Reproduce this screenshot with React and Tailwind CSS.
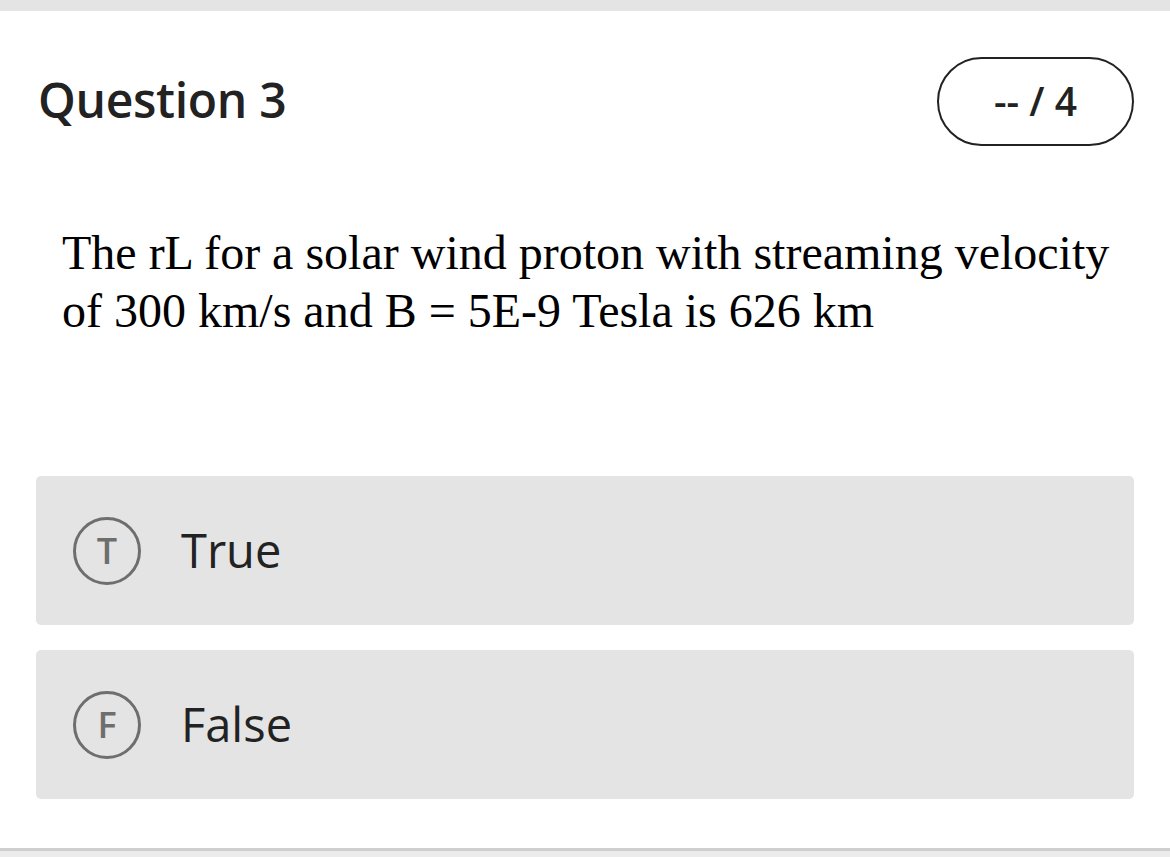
export default function App() {
  const sans = { fontFamily: '"Open Sans", sans-serif' };
  return (
    <div className="w-[1170px] h-[857px] bg-white flex flex-col overflow-hidden">
      <div className="h-[11px] bg-[#e4e4e4] shrink-0" />
      <div className="flex-1 flex flex-col px-[36px]">
        <div className="flex items-center justify-between mt-[46px] h-[89px]">
          <div className="pl-[2px] text-[48px] font-semibold text-[#222] leading-none tracking-[-0.3px] -mt-[4px]" style={sans}>Question 3</div>
          <div className="w-[197px] h-[89px] rounded-full border-[2.5px] border-[#222] flex items-center justify-center text-[39px] font-semibold text-[#222]" style={sans}>-- / 4</div>
        </div>
        <div className="mt-[78px] pl-[26px] text-[48px] leading-[58px] text-black" style={{ fontFamily: '"Liberation Serif", serif' }}>
          The rL for a solar wind proton with streaming velocity<br />of 300 km/s and B = 5E-9 Tesla is 626 km
        </div>
        <div className="mt-[136px] flex flex-col gap-[25px]">
          {[['T', 'True'], ['F', 'False']].map(([l, t]) => (
            <div key={l} className="h-[149px] rounded-[5px] bg-[#e4e4e4] flex items-center pl-[37px]">
              <div className="w-[68px] h-[68px] rounded-full border-[3px] border-[#6e6e6e] flex items-center justify-center text-[36px] font-semibold text-[#6e6e6e] leading-none" style={sans}>{l}</div>
              <div className="ml-[40px] text-[47px] text-[#222]" style={sans}>{t}</div>
            </div>
          ))}
        </div>
      </div>
      <div className="h-[9px] shrink-0 border-t-[3px] border-[#cfcfcf] bg-[#ececec]" />
    </div>
  );
}
